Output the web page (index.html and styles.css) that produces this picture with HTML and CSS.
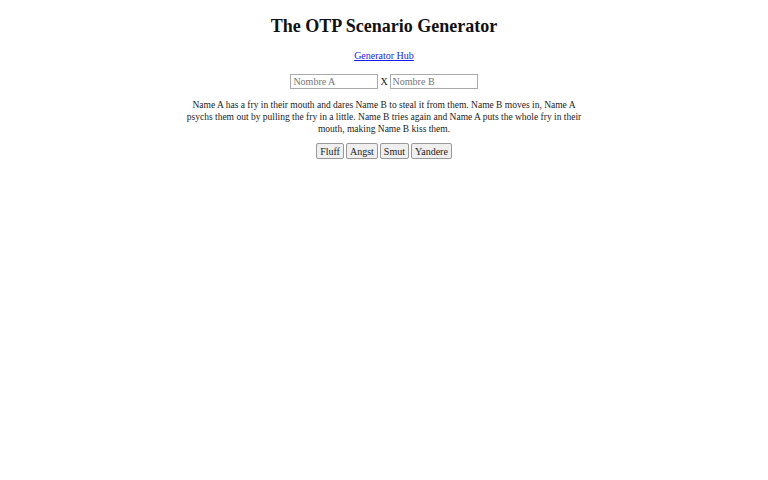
FILE: index.html
```html
<!DOCTYPE html>
<html lang="en">
<head>
<meta charset="UTF-8">
<title>The OTP Scenario Generator</title>
<link rel="stylesheet" href="styles.css">
</head>
<body>
<div class="page">
    <h1 class="title">The OTP Scenario Generator</h1>
    <a class="hub-link" href="#">Generator Hub</a>
    <div class="names">
        <input class="name-input" type="text" placeholder="Nombre A">
        <span class="times">X</span>
        <input class="name-input" type="text" placeholder="Nombre B">
    </div>
    <p class="scenario">Name A has a fry in their mouth and dares Name B to steal it from them. Name B moves in, Name A psychs them out by pulling the fry in a little. Name B tries again and Name A puts the whole fry in their mouth, making Name B kiss them.</p>
    <div class="buttons">
        <button class="gen-button">Fluff</button>
        <button class="gen-button">Angst</button>
        <button class="gen-button">Smut</button>
        <button class="gen-button">Yandere</button>
    </div>
</div>
</body>
</html>
```

FILE: styles.css
```css
body {
    margin: 0;
    background-color: white;
    font-family: 'Liberation Serif', serif;
    color: #222;
}

.page {
    display: flex;
    flex-direction: column;
    align-items: center;
    padding-top: 16px;
}

.title {
    margin: 0;
    font-size: 18px;
    font-weight: bold;
    color: #111;
}

.hub-link {
    margin-top: 13px;
    font-size: 10px;
    color: #1a1aee;
}

.names {
    display: flex;
    align-items: center;
    gap: 1px;
    margin-top: 13px;
    font-size: 10px;
}

.name-input {
    width: 82px;
    height: 11px;
    padding: 1px 2px;
    border: 1px solid #aaa;
    font-family: 'Liberation Serif', serif;
    font-size: 10px;
}

.times {
    padding: 0 1px;
}

.scenario {
    width: 400px;
    margin: 10px 0 0;
    font-size: 9.5px;
    line-height: 12px;
    text-align: center;
}

.buttons {
    display: flex;
    gap: 2px;
    margin-top: 8px;
}

.gen-button {
    padding: 1px 3px;
    height: 16px;
    font-family: 'Liberation Serif', serif;
    font-size: 10px;
    color: #222;
    background-color: #efefef;
    border: 1px solid #999;
    border-radius: 2px;
}
```
